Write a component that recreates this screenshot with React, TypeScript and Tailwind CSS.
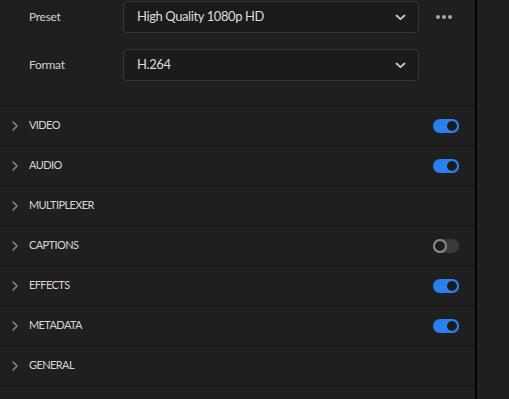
import React from "react";

const rows: { label: string; toggle: "on" | "off" | null }[] = [
  { label: "VIDEO", toggle: "on" },
  { label: "AUDIO", toggle: "on" },
  { label: "MULTIPLEXER", toggle: null },
  { label: "CAPTIONS", toggle: "off" },
  { label: "EFFECTS", toggle: "on" },
  { label: "METADATA", toggle: "on" },
  { label: "GENERAL", toggle: null },
];

function Chevron() {
  return (
    <svg width="6" height="10" viewBox="0 0 6 10" className="shrink-0">
      <path d="M1 1 L5 5 L1 9" fill="none" stroke="#8a8a8a" strokeWidth="1.5" strokeLinecap="round" strokeLinejoin="round" />
    </svg>
  );
}

function DownChevron() {
  return (
    <svg width="11" height="7" viewBox="0 0 11 7">
      <path d="M1.5 1.5 L5.5 5.2 L9.5 1.5" fill="none" stroke="#c8c8c8" strokeWidth="1.8" strokeLinecap="round" strokeLinejoin="round" />
    </svg>
  );
}

function Toggle({ on }: { on: boolean }) {
  return on ? (
    <div className="w-[26px] h-[14px] rounded-full bg-[#2a80ef] flex items-center justify-end">
      <div className="w-[14px] h-[14px] rounded-full bg-[#1b1b1b] border-2 border-[#2a80ef]" />
    </div>
  ) : (
    <div className="w-[26px] h-[14px] rounded-full bg-[#3a3a3a] flex items-center justify-start">
      <div className="w-[14px] h-[14px] rounded-full bg-[#1e1e1e] border-2 border-[#8c8c8c]" />
    </div>
  );
}

function Select({ value }: { value: string }) {
  return (
    <div className="w-[296px] h-[32px] rounded-[4px] border border-[#363636] bg-[#1b1b1b] flex items-center justify-between pl-[13px] pr-[12px]">
      <span className="text-[13px] tracking-[-0.4px] text-[#dcdcdc]">{value}</span>
      <DownChevron />
    </div>
  );
}

export default function App() {
  return (
    <div
      className="w-[509px] h-[399px] bg-[#1f1f1f] flex overflow-hidden"
      style={{ fontFamily: "Lato, 'Open Sans', sans-serif" }}
    >
      <div className="w-[475px] shrink-0 flex flex-col">
        <div className="pt-[1px] pb-[24px] flex flex-col gap-[16px] border-b border-[#141414]">
          <div className="flex items-center">
            <span className="w-[123px] pl-[29px] text-[12px] tracking-[-0.3px] text-[#cfcfcf]">Preset</span>
            <Select value="High Quality 1080p HD" />
            <div className="ml-[17px] flex gap-[2px]">
              <div className="w-[4px] h-[4px] rounded-full bg-[#a8a8a8]" />
              <div className="w-[4px] h-[4px] rounded-full bg-[#a8a8a8]" />
              <div className="w-[4px] h-[4px] rounded-full bg-[#a8a8a8]" />
            </div>
          </div>
          <div className="flex items-center">
            <span className="w-[123px] pl-[29px] text-[12px] tracking-[-0.3px] text-[#cfcfcf]">Format</span>
            <Select value="H.264" />
          </div>
        </div>
        {rows.map((r) => (
          <div key={r.label} className="h-[40px] shrink-0 flex items-center border-b border-[#141414] pl-[12px] pr-[16px]">
            <Chevron />
            <span className="ml-[11px] text-[11px] text-[#d6d6d6] tracking-[-0.6px] flex-1">{r.label}</span>
            {r.toggle && <Toggle on={r.toggle === "on"} />}
          </div>
        ))}
      </div>
      <div className="w-[2px] shrink-0 bg-black" />
      <div className="flex-1 bg-[#1f1f1f]" />
    </div>
  );
}
